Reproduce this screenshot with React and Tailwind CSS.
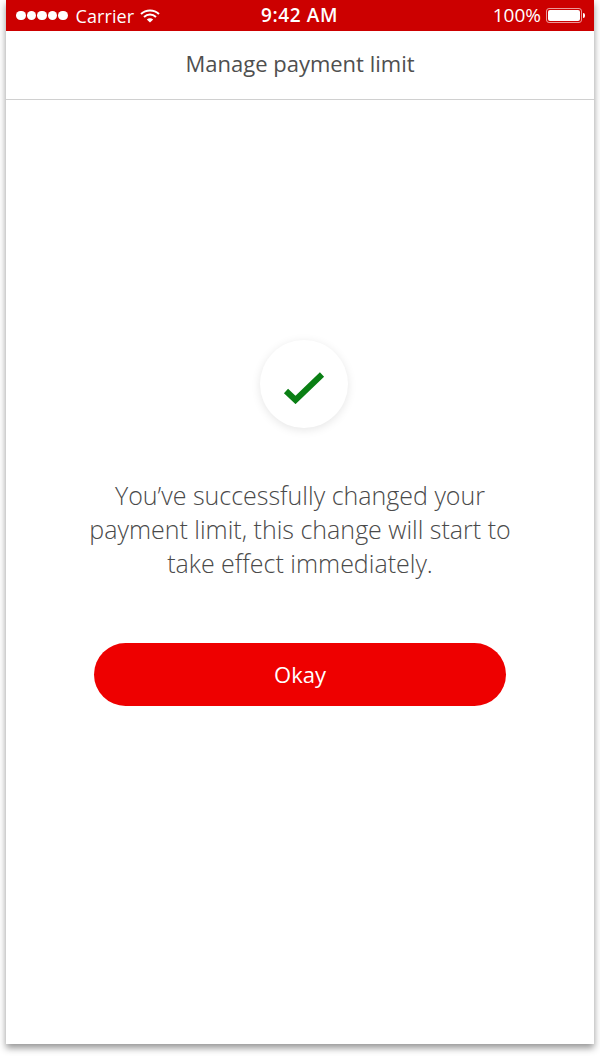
import React from 'react';

const StatusBar = () => (
  <div className="h-[31px] bg-[#cc0000] text-white flex items-center justify-between pl-[10px] pr-[9px] relative">
    <div className="flex items-center">
      <div className="flex gap-[1px]">
        {[0, 1, 2, 3, 4].map((i) => (
          <span key={i} className="w-[9.5px] h-[9.5px] rounded-full bg-white" />
        ))}
      </div>
      <span className="ml-[8px] text-[18px] leading-none tracking-[0.1px]">Carrier</span>
      <svg className="ml-[6px]" width="20" height="14" viewBox="0 0 20 14" fill="none" stroke="white">
        <path d="M1 5 C6 0.2 14 0.2 19 5" strokeWidth="2" />
        <path d="M4 8 C7.5 4.8 12.5 4.8 16 8" strokeWidth="2" />
        <path d="M10 13.5 L6.8 10.4 C8.6 8.9 11.4 8.9 13.2 10.4 Z" fill="white" stroke="none" />
      </svg>
    </div>
    <span className="absolute left-[255px] top-[3px] text-[19px] leading-[24px] font-semibold tracking-[0.6px]">9:42 AM</span>
    <div className="flex items-center">
      <span className="text-[19px] leading-none">100%</span>
      <div className="ml-[5px] w-[36px] h-[15px] rounded-[3px] border border-[#ffffff99] p-[1px]">
        <div className="w-full h-full rounded-[2px] bg-white" />
      </div>
      <div className="w-[2px] h-[5px] bg-white rounded-r-[2px] ml-[1px]" />
    </div>
  </div>
);

export default function App() {
  return (
    <div className="w-[600px] h-[1057px] bg-white font-['Open_Sans',sans-serif] overflow-hidden">
      <div className="mx-[6px] w-[588px] h-[1044px] bg-white flex flex-col shadow-[0_4px_7px_rgba(0,0,0,0.42)]">
        <StatusBar />
        <header className="h-[69px] shrink-0 border-b border-[#d0d0d0] flex items-center justify-center text-[22px] text-[#4f4f4f] pb-[4px]">
          Manage payment limit
        </header>

        <main className="flex flex-col items-center pt-[240px]">
          <div className="ml-[8px] w-[88px] h-[88px] rounded-full bg-white flex items-center justify-center shadow-[0_2px_10px_rgba(0,0,0,0.1)]">
            <svg width="44" height="40" viewBox="0 0 44 40" fill="none">
              <path d="M4 27 L13.5 36 L40 10.5" stroke="#0a7f14" strokeWidth="6" />
            </svg>
          </div>

          <p className="mt-[50px] text-[25px] leading-[34px] font-light text-[#4a4a4a] text-center">
            You’ve successfully changed your
            <br />
            payment limit, this change will start to
            <br />
            take effect immediately.
          </p>

          <button className="mt-[63px] w-[412px] h-[63px] rounded-full bg-[#ee0000] text-white text-[22px] flex items-center justify-center">
            Okay
          </button>
        </main>
      </div>
    </div>
  );
}
